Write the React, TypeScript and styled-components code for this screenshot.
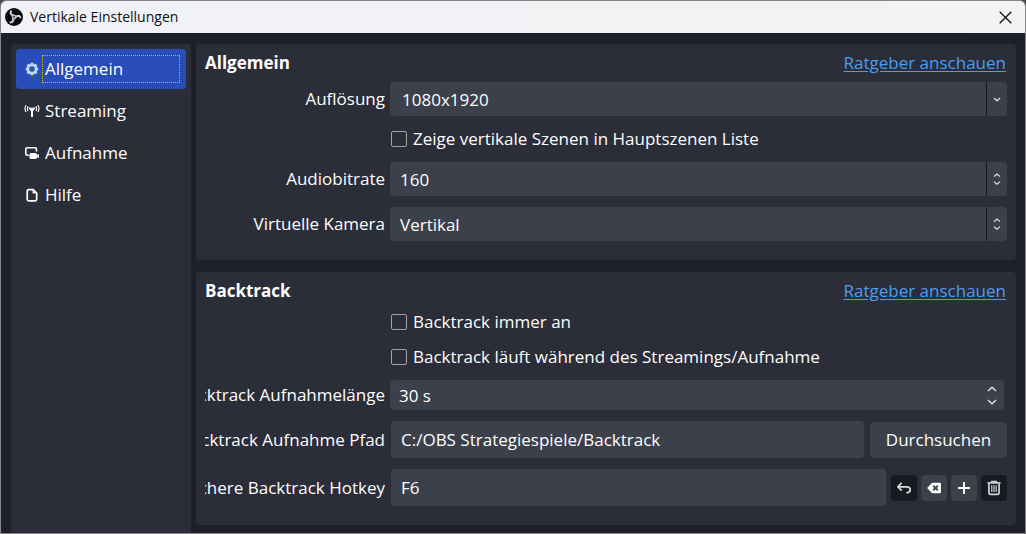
import React, { useState } from "react";
import styled, { createGlobalStyle, css } from "styled-components";

const color = {
  window: "#1d2028",
  panel: "#2b2d38",
  field: "#3c404b",
  dark: "#181a22",
  accent: "#284cb8",
  text: "#fefefe",
  link: "#4a9df0",
};

const GlobalStyle = createGlobalStyle`
  *, *::before, *::after { box-sizing: border-box; }
  body {
    margin: 0;
    background: #4a4a4c;
    color: ${color.text};
    font-family: "Open Sans", "Noto Sans", sans-serif;
    font-size: 17px;
    line-height: 24px;
  }
  button, input, select { font: inherit; color: inherit; }
`;

const Window = styled.div`
  display: flex;
  flex-direction: column;
  min-height: 100vh;
  border: 1px solid #858588;
  border-radius: 6px 6px 0 0;
  overflow: hidden;
  background: ${color.window};
`;

const TitleBar = styled.header`
  display: flex;
  align-items: center;
  gap: 7px;
  height: 32px;
  padding: 0 11px 0 4px;
  background: linear-gradient(90deg, #f1f2f8, #f3f3f3);
  color: #111;
`;

const WindowTitle = styled.h1`
  flex: 1;
  margin: 0;
  font-family: "Open Sans", sans-serif;
  font-size: 14px;
  font-weight: 400;
`;

const CloseButton = styled.button`
  display: flex;
  padding: 2px;
  border: 0;
  background: none;
  color: #111;
`;

const Body = styled.div`
  flex: 1;
  display: flex;
  gap: 5px;
  padding: 11px 9px 0 10px;
`;

const Sidebar = styled.nav`
  flex: 0 0 180px;
  display: flex;
  flex-direction: column;
  gap: 2px;
  padding: 5px;
  border-radius: 4px 4px 0 0;
  background: ${color.panel};
`;

const NavButton = styled.button<{ $active: boolean }>`
  display: flex;
  align-items: center;
  height: 40px;
  padding: 0 6px 0 8px;
  gap: 2px;
  border: 0;
  border-radius: 4px;
  outline: 0;
  background: ${(p) => (p.$active ? color.accent : "transparent")};
  text-align: left;

  svg { color: ${(p) => (p.$active ? "#bcd6ff" : color.text)}; }
`;

const NavText = styled.span<{ $active: boolean }>`
  flex: 1;
  height: 28px;
  padding: 1px 2px;
  border: 1px dotted ${(p) => (p.$active ? "#e0b02c" : "transparent")};
`;

const Content = styled.main`
  flex: 1;
  min-width: 0;
  display: flex;
  flex-direction: column;
  gap: 12px;
  padding-bottom: 8px;
`;

const Group = styled.section`
  padding: 0 9px 19px;
  border-radius: 4px;
  background: ${color.panel};
`;

const GroupHeader = styled.div`
  display: flex;
  align-items: center;
  justify-content: space-between;
  height: 38px;
  padding-right: 1px;
`;

const GroupTitle = styled.h2`
  margin: 0;
  font-size: 17px;
  font-weight: 700;
`;

const GuideLink = styled.a`
  color: ${color.link};
  text-underline-offset: 2px;
`;

const Rows = styled.div`
  display: flex;
  flex-direction: column;
  gap: 11px;
`;

const Row = styled.div`
  display: grid;
  grid-template-columns: 180px minmax(0, 1fr);
  column-gap: 5px;
  align-items: center;
`;

const RowLabel = styled.label`
  display: flex;
  justify-content: flex-end;
  overflow: hidden;
  white-space: nowrap;
`;

const CheckLabel = styled.label`
  grid-column: 2;
  display: flex;
  align-items: center;
  gap: 6px;
  padding-left: 1px;
`;

const CheckBox = styled.input`
  appearance: none;
  width: 16px;
  height: 16px;
  margin: 0;
  border: 1px solid #a3a3a5;
  border-radius: 2px;

  &:checked { background: ${color.accent}; }
`;

const SelectBox = styled.div`
  position: relative;
  display: flex;
`;

const Select = styled.select<{ $indent: number }>`
  appearance: none;
  flex: 1;
  min-width: 0;
  height: 34px;
  padding: 2px 30px 0 ${(p) => p.$indent}px;
  border: 0;
  border-radius: 4px;
  background: ${color.field};
`;

const SelectArrow = styled.span`
  position: absolute;
  inset: 0 0 0 auto;
  display: flex;
  align-items: center;
  justify-content: center;
  width: 21px;
  border-left: 1px solid ${color.dark};
  pointer-events: none;
`;

const fieldBase = css`
  border: 0;
  border-radius: 4px;
  background: ${color.field};
`;

const SpinBox = styled.div`
  ${fieldBase}
  display: flex;
  height: 30px;
  margin-right: 3px;
`;

const SpinInput = styled.input`
  flex: 1;
  min-width: 0;
  padding: 2px 9px 0;
  border: 0;
  background: none;
`;

const SpinButtons = styled.div`
  display: flex;
  flex-direction: column;
  width: 24px;
  padding: 2px 0;
`;

const SpinButton = styled.button`
  flex: 1;
  display: flex;
  align-items: center;
  justify-content: center;
  padding: 0;
  border: 0;
  background: none;
`;

const FieldLine = styled.div<{ $gap: number }>`
  display: flex;
  align-items: center;
  gap: ${(p) => p.$gap}px;
  padding-left: 1px;
`;

const TextInput = styled.input`
  ${fieldBase}
  flex: 1;
  min-width: 0;
  height: 37px;
  padding: 0 10px;
`;

const BrowseButton = styled.button`
  ${fieldBase}
  flex: 0 0 137px;
  height: 36px;
`;

const HotkeyButtons = styled.div`
  display: flex;
  gap: 4px;
`;

const IconButton = styled.button<{ $dark?: boolean }>`
  display: flex;
  align-items: center;
  justify-content: center;
  width: 26px;
  height: 26px;
  padding: 0;
  border: 0;
  border-radius: 4px;
  background: ${(p) => (p.$dark ? color.dark : color.field)};
`;

const ObsLogo = () => (
  <svg width="18" height="18" viewBox="0 0 18 18" aria-hidden="true">
    <circle cx="9" cy="9" r="9" fill="#080808" />
    <g fill="none" stroke="#d4d4d8" strokeWidth="2" strokeLinecap="round">
      {[0, 120, 240].map((angle) => (
        <path key={angle} transform={`rotate(${angle} 9 9)`} d="M6 3.2C5 5.4 6.2 7.4 8.8 7.5" />
      ))}
    </g>
    <g fill="none" stroke="#b4b4ba" strokeWidth="1.2">
      {[0, 120, 240].map((angle) => (
        <path key={angle} transform={`rotate(${angle} 9 9)`} d="M8.8 7.5C10.6 7.3 11.6 8.2 12 9.4" />
      ))}
    </g>
  </svg>
);

const CloseIcon = () => (
  <svg width="13" height="13" viewBox="0 0 13 13" aria-hidden="true">
    <path d="M.7 .7 12.3 12.3M12.3 .7 .7 12.3" fill="none" stroke="currentColor" strokeWidth="1.3" />
  </svg>
);

const NavSvg = ({ children }: { children: React.ReactNode }) => (
  <svg width="16" height="16" viewBox="0 0 16 16" aria-hidden="true">
    {children}
  </svg>
);

const GearIcon = () => (
  <NavSvg>
    <circle cx="8" cy="8" r="4" fill="none" stroke="currentColor" strokeWidth="2.6" />
    <g fill="currentColor">
      {[0, 45, 90, 135, 180, 225, 270, 315].map((angle) => (
        <rect key={angle} x="6.5" y="1.7" width="3" height="2.4" rx=".4" transform={`rotate(${angle} 8 8)`} />
      ))}
    </g>
  </NavSvg>
);

const AntennaIcon = () => (
  <NavSvg>
    <g fill="none" stroke="currentColor" strokeLinecap="round">
      <path d="M8 8V14" strokeWidth="2" strokeLinecap="butt" />
      <path d="M5.2 4.8 8 8.6 10.8 4.8" strokeWidth="1.2" />
      <path d="M6 5 8 7.8 10 5Z" fill="currentColor" strokeWidth=".4" />
      <path d="M3.9 3.6C3.2 4.8 3.2 6.4 4 7.6M12.1 3.6C12.8 4.8 12.8 6.4 12 7.6" strokeWidth="1.1" />
      <path d="M1.9 2.6C.8 4.4 .8 6.8 1.9 8.6M14.1 2.6C15.2 4.4 15.2 6.8 14.1 8.6" strokeWidth="1.1" />
    </g>
  </NavSvg>
);

const RecordIcon = () => (
  <NavSvg>
    <path
      d="M4.8 10.2H3.3Q1.8 10.2 1.8 8.7V4.2Q1.8 2.7 3.3 2.7H11Q12.5 2.7 12.5 4.2V6.6"
      fill="none"
      stroke="currentColor"
      strokeWidth="1.6"
    />
    <rect x="5.4" y="8" width="7.6" height="6" rx="1.8" fill="currentColor" />
    <path d="M12 11 15 8.8V13.4Z" fill="currentColor" />
  </NavSvg>
);

const FileIcon = () => (
  <NavSvg>
    <path
      d="M4.8 2.6H9.2L12.7 6V12.2Q12.7 13.8 11.1 13.8H4.8Q3.2 13.8 3.2 12.2V4.2Q3.2 2.6 4.8 2.6Z"
      fill="none"
      stroke="currentColor"
      strokeWidth="1.7"
      strokeLinejoin="round"
    />
    <path d="M8.6 2.4V6.5H12.9Z" fill="currentColor" />
  </NavSvg>
);

const ArrowDown = () => (
  <svg width="8" height="5" viewBox="0 0 8 5" aria-hidden="true">
    <path d="M.9 1 4 3.8 7.1 1" fill="none" stroke="#d8d9dc" strokeWidth="1.5" />
  </svg>
);

const ArrowPair = () => (
  <svg width="8" height="12" viewBox="0 0 8 12" aria-hidden="true">
    <path d="M1 3.6 4 1 7 3.6M1 8.6 4 11.2 7 8.6" fill="none" stroke="#e6e6e8" strokeWidth="1.2" />
  </svg>
);

const SpinArrow = ({ up }: { up?: boolean }) => (
  <svg width="10" height="6" viewBox="0 0 10 6" aria-hidden="true">
    <path d={up ? "M1 5 5 1.2 9 5" : "M1 1 5 4.8 9 1"} fill="none" stroke="#e6e6e8" strokeWidth="1.4" />
  </svg>
);

const UndoIcon = () => (
  <svg width="16" height="16" viewBox="0 0 16 16" aria-hidden="true">
    <path
      d="M5.2 3.4 1.9 6.8 5.2 10.2M2.2 6.8H10.8Q14.2 6.8 14.2 9.8 14.2 12.6 11 12.6"
      fill="none"
      stroke="#d9dade"
      strokeWidth="1.7"
      strokeLinecap="round"
      strokeLinejoin="round"
    />
  </svg>
);

const ClearIcon = () => (
  <svg width="16" height="16" viewBox="0 0 16 16" aria-hidden="true">
    <path d="M1.2 8 5.4 3.4Q5.9 2.8 6.7 2.8H13.7Q15 2.8 15 4.1V11.9Q15 13.2 13.7 13.2H6.7Q5.9 13.2 5.4 12.6Z" fill="#fefefe" />
    <path d="M7.2 5.7 11.8 10.3M11.8 5.7 7.2 10.3" stroke={color.field} strokeWidth="1.8" />
  </svg>
);

const PlusIcon = () => (
  <svg width="14" height="14" viewBox="0 0 14 14" aria-hidden="true">
    <path d="M7 1V13M1 7H13" stroke="#fefefe" strokeWidth="1.8" />
  </svg>
);

const TrashIcon = () => (
  <svg width="16" height="16" viewBox="0 0 16 16" fill="none" stroke="#d2d3d7" aria-hidden="true">
    <path d="M1.4 2.9H14.6" strokeWidth="1.7" />
    <path d="M5.6 2.4V1.3H10.4V2.4" strokeWidth="1.2" />
    <path d="M2.9 3.8V12.6Q2.9 14.3 4.6 14.3H11.4Q13.1 14.3 13.1 12.6V3.8" strokeWidth="1.7" />
    <path d="M5.8 5.2V12M8 5.2V12M10.2 5.2V12" strokeWidth="1.2" />
  </svg>
);

const navItems = [
  { name: "Allgemein", Icon: GearIcon },
  { name: "Streaming", Icon: AntennaIcon },
  { name: "Aufnahme", Icon: RecordIcon },
  { name: "Hilfe", Icon: FileIcon },
];

type SelectRowProps = { id: string; label: string; value: string; indent: number; pair?: boolean };

const SelectRow = ({ id, label, value, indent, pair }: SelectRowProps) => (
  <Row>
    <RowLabel htmlFor={id}>{label}</RowLabel>
    <SelectBox>
      <Select id={id} $indent={indent}>
        <option>{value}</option>
      </Select>
      <SelectArrow>{pair ? <ArrowPair /> : <ArrowDown />}</SelectArrow>
    </SelectBox>
  </Row>
);

const CheckRow = ({ label }: { label: string }) => (
  <Row>
    <CheckLabel>
      <CheckBox type="checkbox" />
      {label}
    </CheckLabel>
  </Row>
);

export default function App() {
  const [active, setActive] = useState("Allgemein");
  const [seconds, setSeconds] = useState(30);
  const [path, setPath] = useState("C:/OBS Strategiespiele/Backtrack");
  const [hotkey, setHotkey] = useState("F6");

  return (
    <>
      <GlobalStyle />
      <Window>
        <TitleBar>
          <ObsLogo />
          <WindowTitle>Vertikale Einstellungen</WindowTitle>
          <CloseButton aria-label="Schließen">
            <CloseIcon />
          </CloseButton>
        </TitleBar>
        <Body>
          <Sidebar>
            {navItems.map(({ name, Icon }) => (
              <NavButton key={name} $active={name === active} onClick={() => setActive(name)}>
                <Icon />
                <NavText $active={name === active}>{name}</NavText>
              </NavButton>
            ))}
          </Sidebar>
          <Content>
            <Group>
              <GroupHeader>
                <GroupTitle>Allgemein</GroupTitle>
                <GuideLink href="#allgemein">Ratgeber anschauen</GuideLink>
              </GroupHeader>
              <Rows>
                <SelectRow id="resolution" label="Auflösung" value="1080x1920" indent={12} />
                <CheckRow label="Zeige vertikale Szenen in Hauptszenen Liste" />
                <SelectRow id="bitrate" label="Audiobitrate" value="160" indent={10} pair />
                <SelectRow id="camera" label="Virtuelle Kamera" value="Vertikal" indent={10} pair />
              </Rows>
            </Group>
            <Group>
              <GroupHeader>
                <GroupTitle>Backtrack</GroupTitle>
                <GuideLink href="#backtrack">Ratgeber anschauen</GuideLink>
              </GroupHeader>
              <Rows>
                <CheckRow label="Backtrack immer an" />
                <CheckRow label="Backtrack läuft während des Streamings/Aufnahme" />
                <Row>
                  <RowLabel htmlFor="length">Backtrack Aufnahmelänge</RowLabel>
                  <SpinBox>
                    <SpinInput id="length" value={`${seconds} s`} readOnly />
                    <SpinButtons>
                      <SpinButton aria-label="Mehr" onClick={() => setSeconds(seconds + 1)}>
                        <SpinArrow up />
                      </SpinButton>
                      <SpinButton aria-label="Weniger" onClick={() => setSeconds(Math.max(0, seconds - 1))}>
                        <SpinArrow />
                      </SpinButton>
                    </SpinButtons>
                  </SpinBox>
                </Row>
                <Row>
                  <RowLabel htmlFor="path">Backtrack Aufnahme Pfad</RowLabel>
                  <FieldLine $gap={6}>
                    <TextInput id="path" value={path} onChange={(e) => setPath(e.target.value)} />
                    <BrowseButton>Durchsuchen</BrowseButton>
                  </FieldLine>
                </Row>
                <Row>
                  <RowLabel htmlFor="hotkey">Speichere Backtrack Hotkey</RowLabel>
                  <FieldLine $gap={5}>
                    <TextInput id="hotkey" value={hotkey} onChange={(e) => setHotkey(e.target.value)} />
                    <HotkeyButtons>
                      <IconButton $dark aria-label="Zurücksetzen" onClick={() => setHotkey("F6")}>
                        <UndoIcon />
                      </IconButton>
                      <IconButton aria-label="Leeren" onClick={() => setHotkey("")}>
                        <ClearIcon />
                      </IconButton>
                      <IconButton aria-label="Hinzufügen">
                        <PlusIcon />
                      </IconButton>
                      <IconButton $dark aria-label="Entfernen">
                        <TrashIcon />
                      </IconButton>
                    </HotkeyButtons>
                  </FieldLine>
                </Row>
              </Rows>
            </Group>
          </Content>
        </Body>
      </Window>
    </>
  );
}
